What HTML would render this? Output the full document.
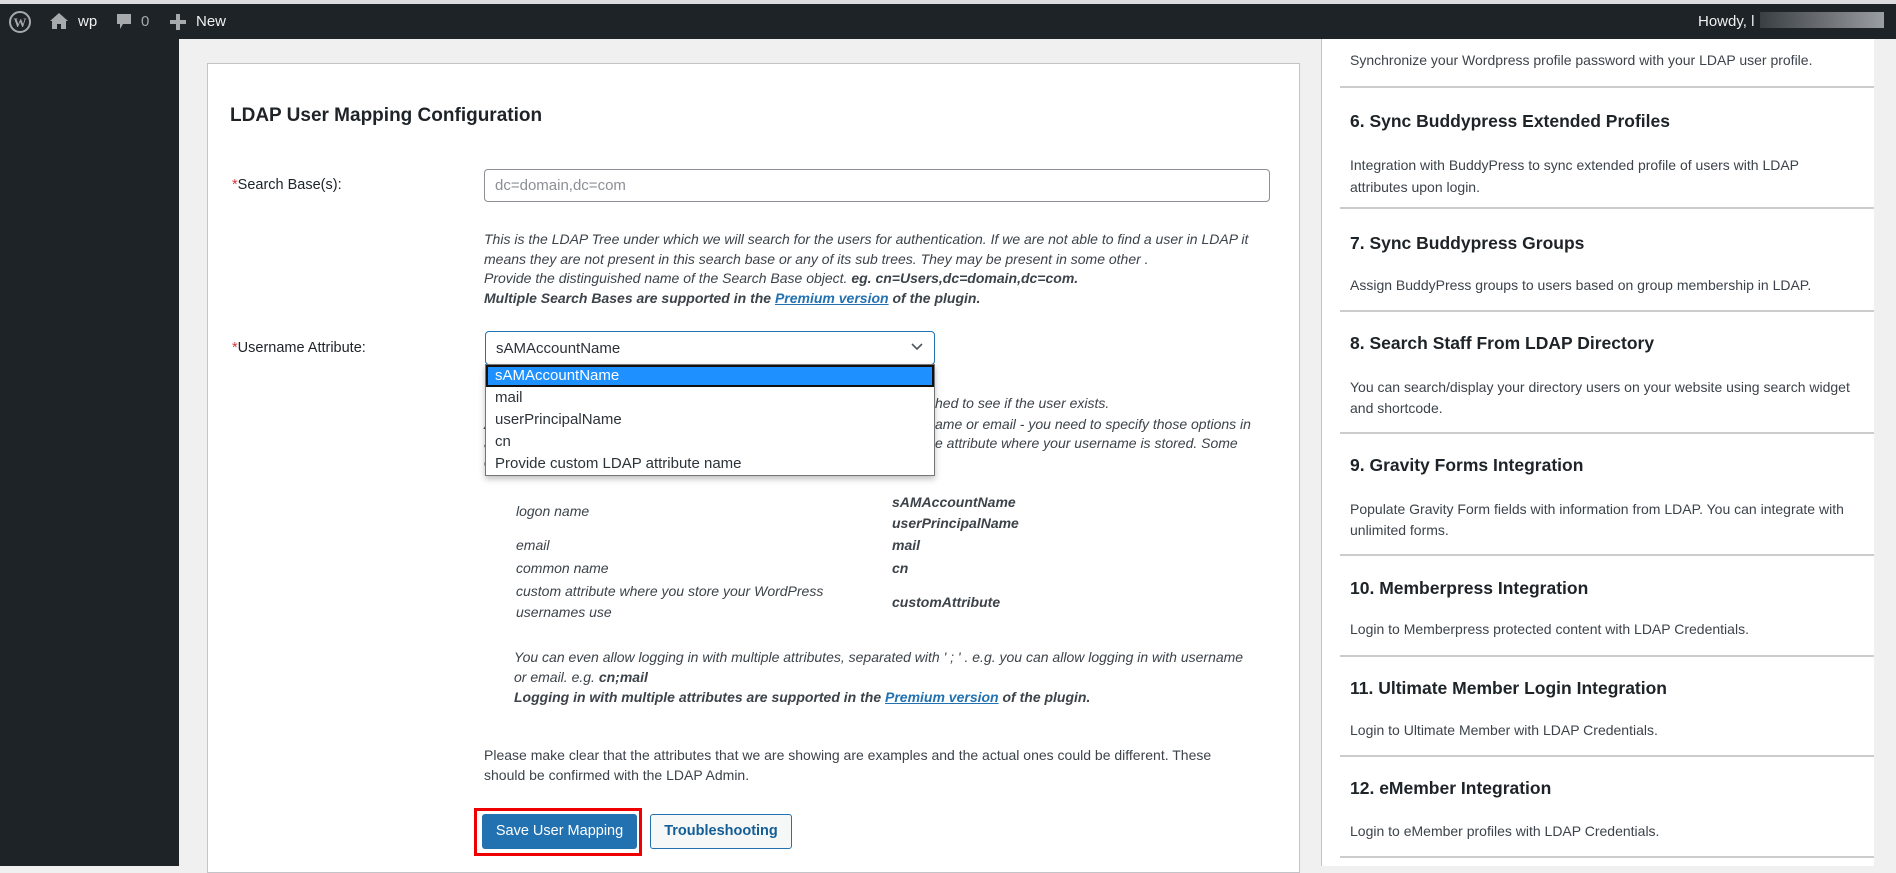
<!DOCTYPE html>
<html><head><meta charset="utf-8"><style>
*{margin:0;padding:0;box-sizing:border-box}
body{width:1896px;height:866px;overflow:hidden;background:#f0f0f1;font-family:"Liberation Sans",sans-serif;color:#3c434a;position:relative;font-size:14px}
.a{position:absolute;white-space:nowrap}
#top{position:absolute;left:0;top:0;width:1896px;height:39px;background:#1d2327;border-top:4px solid #dcdcde}
#side{position:absolute;left:0;top:39px;width:179px;height:827px;background:#1d2327}
.tb{color:#f0f0f1;font-size:15px;top:13px}
#panel{position:absolute;left:207px;top:63px;width:1093px;height:810px;background:#fff;border:1px solid #c3c4c7}
#rp{position:absolute;left:1321px;top:39px;width:553px;height:827px;background:#fff;border-left:1px solid #c3c4c7}
.sep{position:absolute;left:1340px;width:534px;height:2px;background:#ccc}
.h{font-weight:bold;font-size:17.5px;color:#1d2327;left:1350px}
.d{font-size:14px;color:#3c434a;left:1350px}
.i{font-style:italic;font-size:14px;color:#3c434a}
.lbl{font-size:14.5px;color:#1d2327}
.lbl b{color:#d63638;font-weight:normal}
a{color:#2271b1}
.opt{position:absolute;left:0;width:100%;height:22px;padding-left:9px;font-size:15px;color:#2c3338;line-height:22px}
</style></head><body>
<div id="top"></div>
<svg class="a" style="left:9px;top:11px" width="22" height="22" viewBox="0 0 22 22"><circle cx="11" cy="11" r="10" fill="none" stroke="#a7aaad" stroke-width="2"/><text x="11" y="16" font-size="13" font-weight="bold" fill="#a7aaad" text-anchor="middle" font-family="Liberation Serif">W</text></svg>
<svg class="a" style="left:49px;top:12px" width="20" height="18" viewBox="0 0 20 18"><path d="M10 1 L1 9 L3 9 L3 17 L8 17 L8 12 L12 12 L12 17 L17 17 L17 9 L19 9 Z" fill="#a7aaad"/></svg>
<div class="a tb" style="left:78px">wp</div>
<svg class="a" style="left:115px;top:13px" width="18" height="18" viewBox="0 0 18 18"><path d="M2 1 H16 V11 H8 L5 16 V11 H2 Z" fill="#a7aaad"/></svg>
<div class="a tb" style="left:141px;color:#a7aaad">0</div>
<svg class="a" style="left:170px;top:14px" width="16" height="16"><rect x="6" y="0" width="4" height="16" fill="#a7aaad"/><rect x="0" y="6" width="16" height="4" fill="#a7aaad"/></svg>
<div class="a tb" style="left:196px">New</div>
<div class="a tb" style="left:1698px">Howdy, l</div>
<div class="a" style="left:1760px;top:12px;width:124px;height:16px;background:linear-gradient(90deg,#3a3f44,#6a6e72,#9a9ea2)"></div>
<div id="side"></div>
<div id="panel"></div>
<div class="a" style="left:230px;top:105px;font-size:19px;font-weight:bold;color:#1d2327">LDAP User Mapping Configuration</div>
<div class="a lbl" style="left:232px;top:177px"><b>*</b>Search Base(s):</div>
<div class="a" style="left:484px;top:169px;width:786px;height:33px;border:1px solid #8c8f94;border-radius:4px;padding:7px 10px;font-size:15px;color:#8c8f94">dc=domain,dc=com</div>
<div class="a i" style="left:484px;top:230px;line-height:19.5px">This is the LDAP Tree under which we will search for the users for authentication. If we are not able to find a user in LDAP it<br>means they are not present in this search base or any of its sub trees. They may be present in some other .<br>Provide the distinguished name of the Search Base object. <b>eg. cn=Users,dc=domain,dc=com.</b><br><b>Multiple Search Bases are supported in the <a href="#">Premium version</a> of the plugin.</b></div>
<div class="a lbl" style="left:232px;top:340px"><b>*</b>Username Attribute:</div>
<div class="a i" style="left:935px;top:395px">hed to see if the user exists.</div>
<div class="a i" style="left:935px;top:416px">ame or email - you need to specify those options in</div>
<div class="a i" style="left:935px;top:435px">e attribute where your username is stored. Some</div>
<div class="a i" style="left:484px;top:416px">A</div><div class="a i" style="left:484px;top:435px">a</div><div class="a i" style="left:484px;top:454px">c</div>
<div class="a" style="left:485px;top:331px;width:450px;height:34px;border:1px solid #2271b1;border-radius:4px;padding:8px 10px;font-size:15px;color:#2c3338;background:#fff">sAMAccountName</div>
<svg class="a" style="left:910px;top:342px" width="14" height="10"><path d="M2 2 L7 7 L12 2" stroke="#50575e" stroke-width="1.6" fill="none"/></svg>
<div class="a" style="left:485px;top:364px;width:450px;height:112px;background:#fff;border:1px solid #767676;box-shadow:0 3px 6px rgba(0,0,0,.25)">
<div class="opt" style="top:0;background:#1e90ff;color:#fff;border:2px solid #111;padding-left:7px;line-height:18px">sAMAccountName</div>
<div class="opt" style="top:22px">mail</div>
<div class="opt" style="top:44px">userPrincipalName</div>
<div class="opt" style="top:66px">cn</div>
<div class="opt" style="top:88px">Provide custom LDAP attribute name</div>
</div>
<div class="a i" style="left:516px;top:503px">logon name</div>
<div class="a i" style="left:892px;top:492px;font-weight:bold;line-height:21px">sAMAccountName<br>userPrincipalName</div>
<div class="a i" style="left:516px;top:537px">email</div><div class="a i" style="left:892px;top:537px;font-weight:bold">mail</div>
<div class="a i" style="left:516px;top:560px">common name</div><div class="a i" style="left:892px;top:560px;font-weight:bold">cn</div>
<div class="a i" style="left:516px;top:581px;line-height:21px">custom attribute where you store your WordPress<br>usernames use</div>
<div class="a i" style="left:892px;top:594px;font-weight:bold">customAttribute</div>
<div class="a i" style="left:514px;top:647px;line-height:20px">You can even allow logging in with multiple attributes, separated with ' ; ' . e.g. you can allow logging in with username<br>or email. e.g. <b>cn;mail</b><br><b>Logging in with multiple attributes are supported in the <a href="#">Premium version</a> of the plugin.</b></div>
<div class="a" style="left:484px;top:745px;font-size:14px;line-height:20px">Please make clear that the attributes that we are showing are examples and the actual ones could be different. These<br>should be confirmed with the LDAP Admin.</div>
<div class="a" style="left:474px;top:808px;width:168px;height:48px;border:3px solid #e00"></div>
<div class="a" style="left:482px;top:814px;width:155px;height:35px;background:#2271b1;border-radius:3px;color:#fff;font-size:14.5px;text-align:center;line-height:35px">Save User Mapping</div>
<div class="a" style="left:650px;top:814px;width:142px;height:35px;border:1px solid #2271b1;border-radius:3px;color:#135e96;font-size:14.5px;font-weight:bold;text-align:center;line-height:33px;background:#f6f7f7">Troubleshooting</div>
<div id="rp"></div>
<div class="a d" style="top:52px">Synchronize your Wordpress profile password with your LDAP user profile.</div>
<div class="sep" style="top:86px"></div>
<div class="a h" style="top:111px">6. Sync Buddypress Extended Profiles</div>
<div class="a d" style="top:154px;line-height:22px">Integration with BuddyPress to sync extended profile of users with LDAP<br>attributes upon login.</div>
<div class="sep" style="top:207px"></div>
<div class="a h" style="top:233px">7. Sync Buddypress Groups</div>
<div class="a d" style="top:277px">Assign BuddyPress groups to users based on group membership in LDAP.</div>
<div class="sep" style="top:310px"></div>
<div class="a h" style="top:333px">8. Search Staff From LDAP Directory</div>
<div class="a d" style="top:377px;line-height:21px">You can search/display your directory users on your website using search widget<br>and shortcode.</div>
<div class="sep" style="top:432px"></div>
<div class="a h" style="top:455px">9. Gravity Forms Integration</div>
<div class="a d" style="top:499px;line-height:21px">Populate Gravity Form fields with information from LDAP. You can integrate with<br>unlimited forms.</div>
<div class="sep" style="top:554px"></div>
<div class="a h" style="top:578px">10. Memberpress Integration</div>
<div class="a d" style="top:621px">Login to Memberpress protected content with LDAP Credentials.</div>
<div class="sep" style="top:655px"></div>
<div class="a h" style="top:678px">11. Ultimate Member Login Integration</div>
<div class="a d" style="top:722px">Login to Ultimate Member with LDAP Credentials.</div>
<div class="sep" style="top:755px"></div>
<div class="a h" style="top:778px">12. eMember Integration</div>
<div class="a d" style="top:823px">Login to eMember profiles with LDAP Credentials.</div>
<div class="sep" style="top:856px"></div>
</body></html>
